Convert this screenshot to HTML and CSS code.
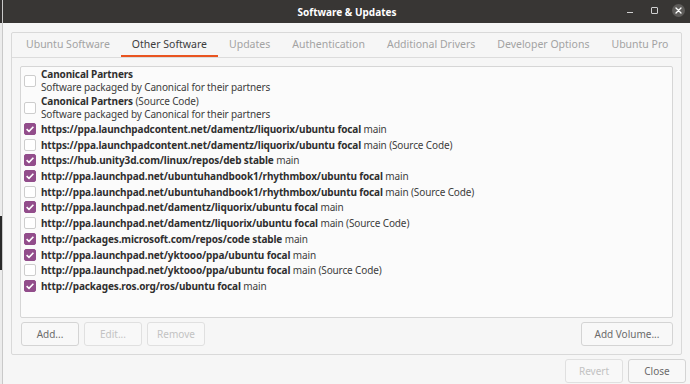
FILE: index.html
```html
<!DOCTYPE html>
<html lang="en">
<head>
    <meta charset="UTF-8">
    <meta name="viewport" content="width=device-width, initial-scale=1.0">
    <title>Software &amp; Updates</title>
    <link rel="stylesheet" href="styles.css">
</head>
<body>
    <div class="desk">
        <div class="edge"><div class="edge-top"></div><div class="edge-pic"></div></div>
        <div class="window">
            <div class="titlebar">
                <span class="title">Software &amp; Updates</span>
                <div class="controls">
                    <span class="ctl-min"></span>
                    <span class="ctl-max"></span>
                    <span class="ctl-close">
                        <svg width="7" height="7" viewBox="0 0 7 7"><path d="M1 1 L6 6 M6 1 L1 6" stroke="#fff" stroke-width="1.3" stroke-linecap="round"/></svg>
                    </span>
                </div>
            </div>

            <div class="content">
                <div class="notebook">
                    <div class="tabs">
                        <div class="tab">Ubuntu Software</div>
                        <div class="tab active">Other Software</div>
                        <div class="tab">Updates</div>
                        <div class="tab">Authentication</div>
                        <div class="tab">Additional Drivers</div>
                        <div class="tab">Developer Options</div>
                        <div class="tab">Ubuntu Pro</div>
                    </div>
                    <div class="page">
                        <div class="sources">
                            <div class="row two">
                                <span class="check"></span>
                                <div class="text">
                                    <div><b>Canonical Partners</b></div>
                                    <div>Software packaged by Canonical for their partners</div>
                                </div>
                            </div>
                            <div class="row two">
                                <span class="check"></span>
                                <div class="text">
                                    <div><b>Canonical Partners</b> (Source Code)</div>
                                    <div>Software packaged by Canonical for their partners</div>
                                </div>
                            </div>
                            <div class="row"><span class="check on"><svg width="10" height="10" viewBox="0 0 10 10"><path d="M1.6 5.2 L4 7.4 L8.4 2.8" fill="none" stroke="#fff" stroke-width="1.6"/></svg></span><div class="text"><b>https://ppa.launchpadcontent.net/damentz/liquorix/ubuntu focal</b> main</div></div>
                            <div class="row"><span class="check"></span><div class="text"><b>https://ppa.launchpadcontent.net/damentz/liquorix/ubuntu focal</b> main (Source Code)</div></div>
                            <div class="row"><span class="check on"><svg width="10" height="10" viewBox="0 0 10 10"><path d="M1.6 5.2 L4 7.4 L8.4 2.8" fill="none" stroke="#fff" stroke-width="1.6"/></svg></span><div class="text"><b>https://hub.unity3d.com/linux/repos/deb stable</b> main</div></div>
                            <div class="row"><span class="check on"><svg width="10" height="10" viewBox="0 0 10 10"><path d="M1.6 5.2 L4 7.4 L8.4 2.8" fill="none" stroke="#fff" stroke-width="1.6"/></svg></span><div class="text"><b>http://ppa.launchpad.net/ubuntuhandbook1/rhythmbox/ubuntu focal</b> main</div></div>
                            <div class="row"><span class="check"></span><div class="text"><b>http://ppa.launchpad.net/ubuntuhandbook1/rhythmbox/ubuntu focal</b> main (Source Code)</div></div>
                            <div class="row"><span class="check on"><svg width="10" height="10" viewBox="0 0 10 10"><path d="M1.6 5.2 L4 7.4 L8.4 2.8" fill="none" stroke="#fff" stroke-width="1.6"/></svg></span><div class="text"><b>http://ppa.launchpad.net/damentz/liquorix/ubuntu focal</b> main</div></div>
                            <div class="row"><span class="check"></span><div class="text"><b>http://ppa.launchpad.net/damentz/liquorix/ubuntu focal</b> main (Source Code)</div></div>
                            <div class="row"><span class="check on"><svg width="10" height="10" viewBox="0 0 10 10"><path d="M1.6 5.2 L4 7.4 L8.4 2.8" fill="none" stroke="#fff" stroke-width="1.6"/></svg></span><div class="text"><b>http://packages.microsoft.com/repos/code stable</b> main</div></div>
                            <div class="row"><span class="check on"><svg width="10" height="10" viewBox="0 0 10 10"><path d="M1.6 5.2 L4 7.4 L8.4 2.8" fill="none" stroke="#fff" stroke-width="1.6"/></svg></span><div class="text"><b>http://ppa.launchpad.net/yktooo/ppa/ubuntu focal</b> main</div></div>
                            <div class="row"><span class="check"></span><div class="text"><b>http://ppa.launchpad.net/yktooo/ppa/ubuntu focal</b> main (Source Code)</div></div>
                            <div class="row"><span class="check on"><svg width="10" height="10" viewBox="0 0 10 10"><path d="M1.6 5.2 L4 7.4 L8.4 2.8" fill="none" stroke="#fff" stroke-width="1.6"/></svg></span><div class="text"><b>http://packages.ros.org/ros/ubuntu focal</b> main</div></div>
                        </div>
                        <div class="actions">
                            <button class="btn">Add...</button>
                            <button class="btn" disabled>Edit...</button>
                            <button class="btn" disabled>Remove</button>
                            <span class="spacer"></span>
                            <button class="btn wide">Add Volume...</button>
                        </div>
                    </div>
                </div>
                <div class="dialog-buttons">
                    <button class="btn" disabled>Revert</button>
                    <button class="btn">Close</button>
                </div>
            </div>
        </div>
    </div>
</body>
</html>
```

FILE: styles.css
```css
* {
    box-sizing: border-box;
}
body {
    margin: 0;
    width: 690px;
    height: 384px;
    overflow: hidden;
    font-family: "Noto Sans", "DejaVu Sans", sans-serif;
    font-size: 10px;
    color: #3d3d3d;
    background: #e9e9e9;
}
.desk {
    display: flex;
    height: 384px;
}
.edge {
    width: 3px;
    flex-shrink: 0;
    display: flex;
    flex-direction: column;
    background: #ececec;
    border-right: 1px solid #c9c9c9;
}
.edge-top {
    height: 23px;
    background: #333130;
}
.edge-pic {
    margin-top: 193px;
    height: 54px;
    background: #2a2a2a;
}
.window {
    flex: 1;
    min-width: 0;
    display: flex;
    flex-direction: column;
    background: #f6f6f6;
}
.titlebar {
    position: relative;
    height: 23px;
    flex-shrink: 0;
    background: #383634;
    color: #ffffff;
    display: flex;
    align-items: center;
    justify-content: center;
}
.title {
    font-weight: bold;
    font-size: 10px;
    margin-left: 1px;
}
.controls {
    position: absolute;
    right: 5px;
    top: 4px;
    display: flex;
    align-items: center;
}
.ctl-min {
    width: 6px;
    height: 1px;
    background: #d0d0d0;
    margin-top: 3px;
    margin-right: 18px;
}
.ctl-max {
    width: 7px;
    height: 7px;
    border: 1px solid #d0d0d0;
    border-radius: 1px;
    margin-right: 14px;
}
.ctl-close {
    width: 13px;
    height: 13px;
    border-radius: 50%;
    background: #5e5c5a;
    display: flex;
    align-items: center;
    justify-content: center;
}
.content {
    flex: 1;
    min-width: 0;
    display: flex;
    flex-direction: column;
    padding: 9px 4px 3px 8px;
}
.notebook {
    min-width: 0;
    margin-right: 4px;
    border: 1px solid #d9d9d9;
    border-radius: 2px;
    display: flex;
    flex-direction: column;
}
.tabs {
    display: flex;
    height: 25px;
    padding-left: 3px;
    border-bottom: 1px solid #dcdcdc;
    overflow: hidden;
}
.tab {
    padding: 0 11px;
    font-size: 10.5px;
    line-height: 23px;
    color: #a3a3a3;
    border-bottom: 2px solid transparent;
    white-space: nowrap;
}
.tab.active {
    color: #3d3d3d;
    border-bottom-color: #e95420;
}
.page {
    padding: 8px;
}
.sources {
    height: 252px;
    background: #fbfbfb;
    border: 1px solid #d6d6d6;
    border-radius: 2px;
    letter-spacing: -0.13px;
    overflow: hidden;
}
.row {
    display: flex;
    align-items: center;
    padding: 2px 0 1.7px 3px;
    line-height: 12px;
    white-space: nowrap;
}
.row.two {
    padding: 1px 0 0 3px;
    line-height: 13px;
}
.check {
    width: 12px;
    height: 12px;
    margin-right: 5px;
    border: 1px solid #cdcdcd;
    border-radius: 2px;
    background: #ffffff;
    flex-shrink: 0;
    display: flex;
    align-items: center;
    justify-content: center;
}
.check.on {
    border-color: #924d8b;
    background: #924d8b;
}
.text b {
    color: #2f2f2f;
}
.actions {
    display: flex;
    gap: 5px;
    margin-top: 4px;
    padding-left: 1px;
}
.spacer {
    flex: 1;
}
.btn {
    font-family: inherit;
    font-size: 10px;
    color: #6b6b6b;
    height: 24px;
    width: 58px;
    padding: 0;
    background: #f8f8f8;
    border: 1px solid #d4d4d4;
    border-radius: 3px;
}
.btn:disabled {
    color: #c3c3c3;
    border-color: #e0e0e0;
}
.btn.wide {
    width: 92px;
}
.dialog-buttons {
    display: flex;
    justify-content: flex-end;
    gap: 5px;
    margin-top: 4px;
}
```
